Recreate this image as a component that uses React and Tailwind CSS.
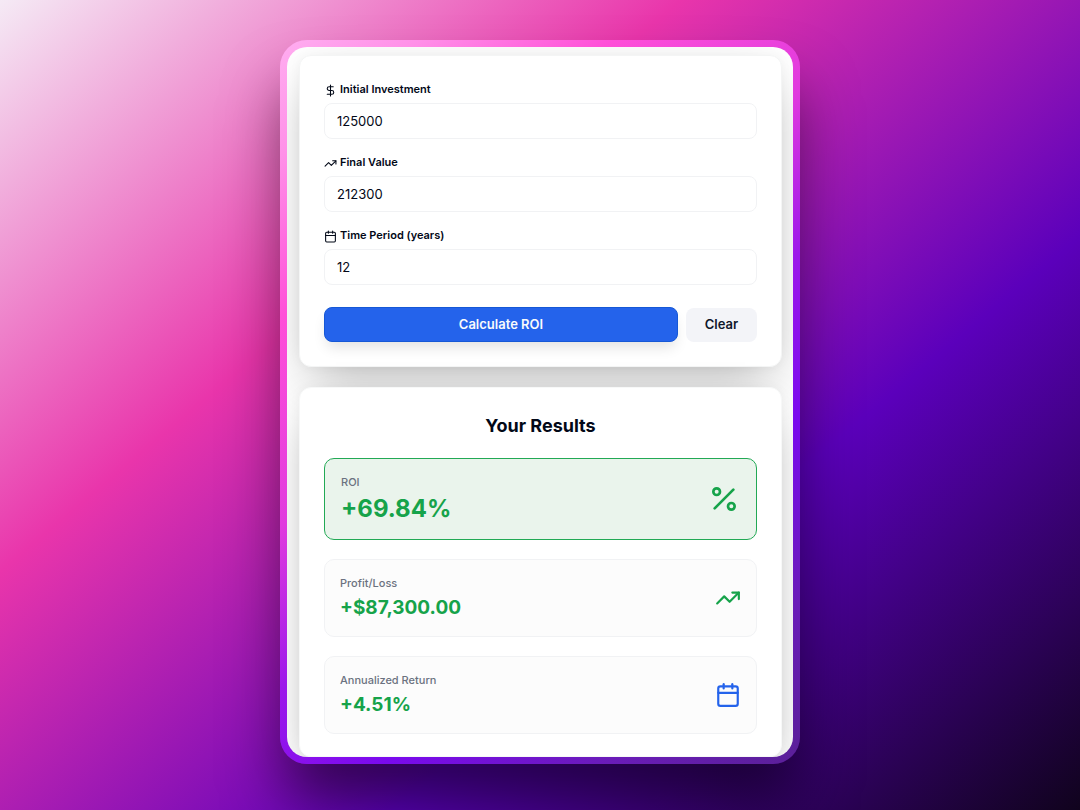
import { useState } from 'react';
import { Calendar, DollarSign, Percent, TrendingUp } from 'lucide-react';

const EMPTY = { initial: '', final: '', years: '' };

const FIELDS = [
  { key: 'initial', label: 'Initial Investment', Icon: DollarSign },
  { key: 'final', label: 'Final Value', Icon: TrendingUp },
  { key: 'years', label: 'Time Period (years)', Icon: Calendar },
];

function compute({ initial, final, years }) {
  const a = Number(initial);
  const b = Number(final);
  const n = Number(years);
  if (!(a > 0) || !(b > 0) || !(n > 0)) return null;
  return {
    roi: ((b - a) / a) * 100,
    profit: b - a,
    annual: (Math.pow(b / a, 1 / n) - 1) * 100,
  };
}

function signed(value, prefix, suffix) {
  const digits = Math.abs(value).toLocaleString('en-US', {
    minimumFractionDigits: 2,
    maximumFractionDigits: 2,
  });
  return (value < 0 ? '-' : '+') + prefix + digits + suffix;
}

function Field({ id, label, Icon, value, onChange }) {
  return (
    <div className="flex flex-col gap-1">
      <label htmlFor={id} className="flex items-center gap-[3px] text-[11px] leading-[19px] font-semibold text-[#020817]">
        <Icon className="mt-0.5 size-[13px]" strokeWidth={2} aria-hidden="true" />
        {label}
      </label>
      <input
        id={id}
        inputMode="decimal"
        value={value}
        onChange={(e) => onChange(e.target.value)}
        className="h-9 w-full rounded-lg border border-[#f1f2f4] bg-white px-3 text-[13px] text-[#020817] outline-none"
      />
    </div>
  );
}

function SmallResult({ label, value, icon }) {
  return (
    <div className="flex items-center justify-between rounded-[10px] border border-[#f1f2f4] bg-[#fcfcfc] p-[15px]">
      <div className="flex flex-col gap-1">
        <p className="text-[11px] leading-4 font-medium text-[#6b7280]">{label}</p>
        <p className="text-[19px] leading-[26px] font-bold text-[#16a34a]">{value}</p>
      </div>
      {icon}
    </div>
  );
}

export default function App() {
  const [values, setValues] = useState({ initial: '125000', final: '212300', years: '12' });
  const [results, setResults] = useState(() => compute(values));

  const submit = (e) => {
    e.preventDefault();
    setResults(compute(values));
  };
  const clear = () => {
    setValues(EMPTY);
    setResults(null);
  };

  return (
    <main className="min-h-screen bg-[linear-gradient(140deg,#f5eaf5_0%,#e935ab_33.3%,#5b00bb_66.6%,#10031d_100%)] px-4 py-10 font-[Inter,sans-serif]">
      <div className="mx-auto max-w-[520px] rounded-[27px] bg-[linear-gradient(140deg,#ffaef0_0%,#ff90e8_10%,#ff4fd8_24%,#e03ade_42%,#9c18ea_56%,#7a0aee_70%,#6a1cb8_86%,#5a2098_100%)] p-[7px] shadow-[0_42px_60px_-5px_rgba(0,0,0,0.55)]">
        <div className="flex flex-col gap-5 overflow-hidden rounded-[20px] bg-white pt-2 pr-[11px] pl-3">
          <form
            onSubmit={submit}
            className="rounded-xl border border-[#f4f5f5] bg-white p-6 shadow-[0_20px_50px_-12px_rgba(0,0,0,0.3),0_0_12px_rgba(0,0,0,0.04)]"
          >
            <div className="flex flex-col gap-3.5">
              {FIELDS.map(({ key, label, Icon }) => (
                <Field
                  key={key}
                  id={key}
                  label={label}
                  Icon={Icon}
                  value={values[key]}
                  onChange={(v) => setValues((prev) => ({ ...prev, [key]: v }))}
                />
              ))}
            </div>
            <div className="mt-[22px] flex items-center gap-2">
              <button
                type="submit"
                className="h-[35px] flex-1 rounded-lg border border-[#1658d6] bg-[#2463eb] text-[13px] font-semibold text-[#f8fafc] shadow-[0_8px_14px_-3px_rgba(0,0,0,0.12)]"
              >
                Calculate ROI
              </button>
              <button
                type="button"
                onClick={clear}
                className="h-[34px] w-[71px] rounded-lg bg-[#f3f4f8] text-[13px] font-semibold text-[#0f172a]"
              >
                Clear
              </button>
            </div>
          </form>

          {results && (
            <section className="rounded-xl border border-[#f7f8f8] bg-white px-6 pt-6 pb-[22px] shadow-[0_20px_50px_-12px_rgba(0,0,0,0.3),0_0_12px_rgba(0,0,0,0.04)]">
              <h2 className="text-center text-[18px] leading-7 font-bold text-[#020817]">Your Results</h2>
              <div className="mt-[18px] flex flex-col gap-[19px]">
                <div className="flex items-center justify-between rounded-[10px] border border-[#22a955] bg-[#eaf4ec] px-4 py-[15px]">
                  <div className="flex flex-col gap-1">
                    <p className="text-[11px] leading-4 font-medium text-[#6b7280]">ROI</p>
                    <p className="text-[24px] leading-[30px] font-bold text-[#16a34a]">{signed(results.roi, '', '%')}</p>
                  </div>
                  <Percent className="size-8 text-[#16a34a]" aria-hidden="true" />
                </div>
                <SmallResult
                  label="Profit/Loss"
                  value={signed(results.profit, '$', '')}
                  icon={<TrendingUp className="size-[26px] text-[#16a34a]" aria-hidden="true" />}
                />
                <SmallResult
                  label="Annualized Return"
                  value={signed(results.annual, '', '%')}
                  icon={<Calendar className="size-[26px] text-[#2463eb]" aria-hidden="true" />}
                />
              </div>
            </section>
          )}
        </div>
      </div>
    </main>
  );
}
